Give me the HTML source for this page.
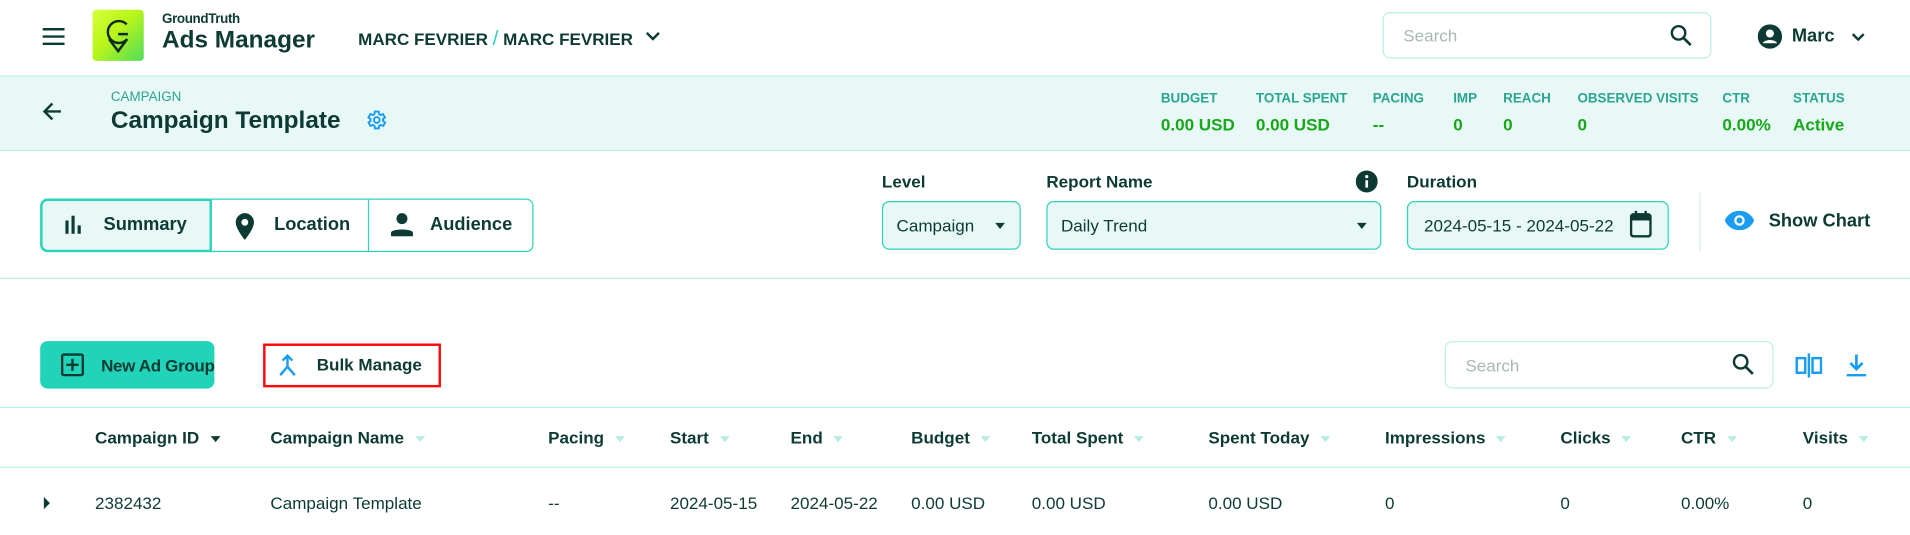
<!DOCTYPE html>
<html><head><meta charset="utf-8">
<style>
*{box-sizing:border-box;margin:0;padding:0}
html,body{width:1910px;height:535px;overflow:hidden;background:#fff}
#s{position:absolute;left:0;top:0;width:1568px;height:439px;transform:scale(1.21811);transform-origin:0 0;font-family:"Liberation Sans",sans-serif;color:#0d3b33}
.a{position:absolute;white-space:nowrap}
.b{font-weight:bold}
.lbl{font-size:11px;font-weight:bold;color:#2aa58f;top:75px}
.val{font-size:14px;font-weight:bold;color:#17a817;top:94px}
.th{font-size:14px;font-weight:bold;top:351px;color:#0d3b33}
.th i{display:inline-block;width:0;height:0;border-left:4px solid transparent;border-right:4px solid transparent;border-top:5px solid #b6ece4;margin-left:9px;vertical-align:middle}
.td{font-size:14px;top:405px;color:#0d3b33}
.box{position:absolute;border:1px solid #2dd4b8;border-radius:6px;background:#e8f8f7}
.hl{position:absolute;left:0;width:1568px;height:1px;background:#b9efe6}
</style></head><body><div id="s">
<!-- header -->
<svg class="a" style="left:35px;top:23px" width="18" height="14" viewBox="0 0 18 14"><path d="M0 1h18M0 7h18M0 13h18" stroke="#0d3b33" stroke-width="2"/></svg>
<div class="a" style="left:76px;top:8px;width:42px;height:42px;border-radius:3px;background:linear-gradient(135deg,#d6ff3a 0%,#b8f51a 45%,#4fdc5a 100%)"></div>
<svg class="a" style="left:85px;top:14px" width="24" height="30" viewBox="0 0 24 30"><path d="M19 6 A9 9 0 1 0 19.5 18 L12 28 L4.5 18" fill="none" stroke="#0d2a25" stroke-width="2"/><path d="M12 14h8" stroke="#0d2a25" stroke-width="2"/></svg>
<div class="a b" style="left:133px;top:10px;font-size:11px;letter-spacing:-.3px">GroundTruth</div>
<div class="a b" style="left:133px;top:22px;font-size:20px">Ads Manager</div>
<div class="a b" style="left:294px;top:22px;font-size:14px">MARC FEVRIER <span style="color:#2dd4b8;font-weight:normal;font-size:17px">/</span> MARC FEVRIER</div>
<svg class="a" style="left:530px;top:26px" width="12" height="8" viewBox="0 0 12 8"><path d="M1 1l5 5 5-5" fill="none" stroke="#0d3b33" stroke-width="2"/></svg>
<div class="a" style="left:1135px;top:10px;width:270px;height:38px;border:1px solid #b9efe6;border-radius:6px"></div>
<div class="a" style="left:1152px;top:21px;font-size:14px;color:#a8b8b4">Search</div>
<svg class="a" style="left:1371px;top:20px" width="18" height="18" viewBox="0 0 18 18"><circle cx="7" cy="7" r="5.5" fill="none" stroke="#0d3b33" stroke-width="2"/><path d="M11 11l6 6" stroke="#0d3b33" stroke-width="2.2"/></svg>
<svg class="a" style="left:1443px;top:20px" width="20" height="20" viewBox="0 0 20 20"><circle cx="10" cy="10" r="10" fill="#0d3b33"/><circle cx="10" cy="7.5" r="3.3" fill="#fff"/><path d="M4 15.5c2-3.5 10-3.5 12 0" fill="#fff"/></svg>
<div class="a b" style="left:1471px;top:21px;font-size:15px">Marc</div>
<svg class="a" style="left:1520px;top:27px" width="11" height="7" viewBox="0 0 11 7"><path d="M1 1l4.5 4.5L10 1" fill="none" stroke="#0d3b33" stroke-width="2"/></svg>
<!-- campaign band -->
<div class="a" style="left:0;top:62px;width:1568px;height:62px;background:#e8f8f7;border-top:1px solid #b9efe6;border-bottom:1px solid #b9efe6"></div>
<svg class="a" style="left:35px;top:84px" width="16" height="15" viewBox="0 0 16 15"><path d="M15 7.5H2M8 1L1.5 7.5 8 14" fill="none" stroke="#0d3b33" stroke-width="2"/></svg>
<div class="a" style="left:91px;top:74px;font-size:11px;color:#2aa58f">CAMPAIGN</div>
<div class="a b" style="left:91px;top:88px;font-size:20px">Campaign Template</div>
<svg class="a" style="left:299px;top:89px" width="19" height="19" viewBox="0 0 24 24"><path d="M19.4 13a7.5 7.5 0 0 0 0-2l2.1-1.6-2-3.5-2.5 1a7 7 0 0 0-1.7-1L15 3.3h-4l-.4 2.6a7 7 0 0 0-1.7 1l-2.5-1-2 3.5L6.6 11a7.5 7.5 0 0 0 0 2l-2.1 1.6 2 3.5 2.5-1a7 7 0 0 0 1.7 1l.4 2.6h4l.4-2.6a7 7 0 0 0 1.7-1l2.5 1 2-3.5z" fill="none" stroke="#1a9cf0" stroke-width="2"/><circle cx="13" cy="12" r="3" fill="none" stroke="#1a9cf0" stroke-width="2"/></svg>
<div class="a lbl" style="left:953px">BUDGET</div><div class="a val" style="left:953px">0.00 USD</div>
<div class="a lbl" style="left:1031px">TOTAL SPENT</div><div class="a val" style="left:1031px">0.00 USD</div>
<div class="a lbl" style="left:1127px">PACING</div><div class="a val" style="left:1127px">--</div>
<div class="a lbl" style="left:1193px">IMP</div><div class="a val" style="left:1193px">0</div>
<div class="a lbl" style="left:1234px">REACH</div><div class="a val" style="left:1234px">0</div>
<div class="a lbl" style="left:1295px">OBSERVED VISITS</div><div class="a val" style="left:1295px">0</div>
<div class="a lbl" style="left:1414px">CTR</div><div class="a val" style="left:1414px">0.00%</div>
<div class="a lbl" style="left:1472px">STATUS</div><div class="a val" style="left:1472px">Active</div>
<!-- tabs -->
<div class="a" style="left:33px;top:163px;width:405px;height:44px;border:1px solid #2dd4b8;border-radius:6px"></div>
<div class="a" style="left:33px;top:163px;width:141px;height:44px;border:2px solid #2dd4b8;border-radius:6px 0 0 6px;background:#e8f8f7"></div>
<div class="a" style="left:302px;top:163px;width:1px;height:44px;background:#2dd4b8"></div>
<svg class="a" style="left:53px;top:177px" width="14" height="15" viewBox="0 0 14 15"><path d="M2 4v11M7 0v15M12 8v7" stroke="#0d3b33" stroke-width="2.6"/></svg>
<div class="a b" style="left:85px;top:176px;font-size:15px">Summary</div>
<svg class="a" style="left:192px;top:174px" width="18" height="24" viewBox="0 0 18 24"><path d="M9 1a7.5 7.5 0 0 0-7.5 7.5C1.5 14 9 23 9 23s7.5-9 7.5-14.5A7.5 7.5 0 0 0 9 1z" fill="#0d3b33"/><circle cx="9" cy="8.5" r="2.8" fill="#fff"/></svg>
<div class="a b" style="left:225px;top:176px;font-size:15px">Location</div>
<svg class="a" style="left:320px;top:174px" width="20" height="20" viewBox="0 0 20 20"><circle cx="10" cy="5.5" r="4.5" fill="#0d3b33"/><path d="M1 20v-3c0-3.5 18-3.5 18 0v3z" fill="#0d3b33"/></svg>
<div class="a b" style="left:353px;top:176px;font-size:15px">Audience</div>
<!-- filters -->
<div class="a b" style="left:724px;top:141px;font-size:14px">Level</div>
<div class="box" style="left:724px;top:165px;width:114px;height:40px"></div>
<div class="a" style="left:736px;top:177px;font-size:14px">Campaign</div>
<div class="a" style="left:817px;top:183px;border-left:4px solid transparent;border-right:4px solid transparent;border-top:5px solid #0d3b33"></div>
<div class="a b" style="left:859px;top:141px;font-size:14px">Report Name</div>
<svg class="a" style="left:1113px;top:140px" width="18" height="18" viewBox="0 0 18 18"><circle cx="9" cy="9" r="9" fill="#0d3b33"/><path d="M9 8v6" stroke="#fff" stroke-width="2.2"/><circle cx="9" cy="5" r="1.3" fill="#fff"/></svg>
<div class="box" style="left:859px;top:165px;width:275px;height:40px"></div>
<div class="a" style="left:871px;top:177px;font-size:14px">Daily Trend</div>
<div class="a" style="left:1114px;top:183px;border-left:4px solid transparent;border-right:4px solid transparent;border-top:5px solid #0d3b33"></div>
<div class="a b" style="left:1155px;top:141px;font-size:14px">Duration</div>
<div class="box" style="left:1155px;top:165px;width:215px;height:40px"></div>
<div class="a" style="left:1169px;top:177px;font-size:14px">2024-05-15 - 2024-05-22</div>
<svg class="a" style="left:1338px;top:173px" width="18" height="22" viewBox="0 0 18 22"><rect x="1" y="3" width="16" height="18" rx="2" fill="none" stroke="#0d3b33" stroke-width="2"/><rect x="1" y="3" width="16" height="5" fill="#0d3b33"/><path d="M5 0v4M13 0v4" stroke="#0d3b33" stroke-width="2"/></svg>
<div class="a" style="left:1395px;top:158px;width:1px;height:49px;background:#d8ecea"></div>
<svg class="a" style="left:1416px;top:173px" width="24" height="16" viewBox="0 0 24 16"><path d="M12 0C6 0 1.5 4 0 8c1.5 4 6 8 12 8s10.5-4 12-8C22.5 4 18 0 12 0z" fill="#1a9cf0"/><circle cx="12" cy="8" r="4.3" fill="#fff"/><circle cx="12" cy="8" r="2.5" fill="#1a9cf0"/></svg>
<div class="a b" style="left:1452px;top:173px;font-size:15px">Show Chart</div>
<div class="hl" style="top:228px"></div>
<!-- actions -->
<div class="a" style="left:33px;top:280px;width:143px;height:39px;background:#20d3b9;border-radius:6px"></div>
<svg class="a" style="left:50px;top:290px" width="19" height="19" viewBox="0 0 19 19"><rect x="1" y="1" width="17" height="17" rx="1.5" fill="none" stroke="#0d3b33" stroke-width="2"/><path d="M9.5 4.5v10M4.5 9.5h10" stroke="#0d3b33" stroke-width="2"/></svg>
<div class="a b" style="left:83px;top:292px;font-size:14px;letter-spacing:-.3px">New Ad Group</div>
<div class="a" style="left:216px;top:282px;width:146px;height:36px;border:2px solid #ff0a0a"></div>
<svg class="a" style="left:227px;top:290px" width="18" height="20" viewBox="0 0 18 20"><path d="M9 2v9L3 18M9 11l6 7M5 6l4-4 4 4" fill="none" stroke="#1a9cf0" stroke-width="2"/></svg>
<div class="a b" style="left:260px;top:291px;font-size:14px">Bulk Manage</div>
<div class="a" style="left:1186px;top:280px;width:270px;height:39px;border:1px solid #b9efe6;border-radius:6px"></div>
<div class="a" style="left:1203px;top:292px;font-size:14px;color:#a8b8b4">Search</div>
<svg class="a" style="left:1422px;top:290px" width="18" height="18" viewBox="0 0 18 18"><circle cx="7" cy="7" r="5.5" fill="none" stroke="#0d3b33" stroke-width="2"/><path d="M11 11l6 6" stroke="#0d3b33" stroke-width="2.2"/></svg>
<svg class="a" style="left:1474px;top:290px" width="22" height="20" viewBox="0 0 22 20"><rect x="1" y="4" width="7" height="12" fill="none" stroke="#1a9cf0" stroke-width="2"/><rect x="14" y="4" width="7" height="12" fill="none" stroke="#1a9cf0" stroke-width="2"/><path d="M11 0v20" stroke="#1a9cf0" stroke-width="2"/></svg>
<svg class="a" style="left:1515px;top:290px" width="18" height="20" viewBox="0 0 18 20"><path d="M9 1v11M4 8l5 5 5-5" fill="none" stroke="#1a9cf0" stroke-width="2.2"/><path d="M1 18h16" stroke="#1a9cf0" stroke-width="2"/></svg>
<!-- table -->
<div class="hl" style="top:334px"></div>
<div class="a th" style="left:78px">Campaign ID<i style="border-top-color:#0d3b33"></i></div>
<div class="a th" style="left:222px">Campaign Name<i></i></div>
<div class="a th" style="left:450px">Pacing<i></i></div>
<div class="a th" style="left:550px">Start<i></i></div>
<div class="a th" style="left:649px">End<i></i></div>
<div class="a th" style="left:748px">Budget<i></i></div>
<div class="a th" style="left:847px">Total Spent<i></i></div>
<div class="a th" style="left:992px">Spent Today<i></i></div>
<div class="a th" style="left:1137px">Impressions<i></i></div>
<div class="a th" style="left:1281px">Clicks<i></i></div>
<div class="a th" style="left:1380px">CTR<i></i></div>
<div class="a th" style="left:1480px">Visits<i></i></div>
<div class="hl" style="top:383px"></div>
<div class="a" style="left:36px;top:408px;border-top:5px solid transparent;border-bottom:5px solid transparent;border-left:5px solid #0d3b33"></div>
<div class="a td" style="left:78px">2382432</div>
<div class="a td" style="left:222px">Campaign Template</div>
<div class="a td" style="left:450px">--</div>
<div class="a td" style="left:550px">2024-05-15</div>
<div class="a td" style="left:649px">2024-05-22</div>
<div class="a td" style="left:748px">0.00 USD</div>
<div class="a td" style="left:847px">0.00 USD</div>
<div class="a td" style="left:992px">0.00 USD</div>
<div class="a td" style="left:1137px">0</div>
<div class="a td" style="left:1281px">0</div>
<div class="a td" style="left:1380px">0.00%</div>
<div class="a td" style="left:1480px">0</div>
</div></body></html>
